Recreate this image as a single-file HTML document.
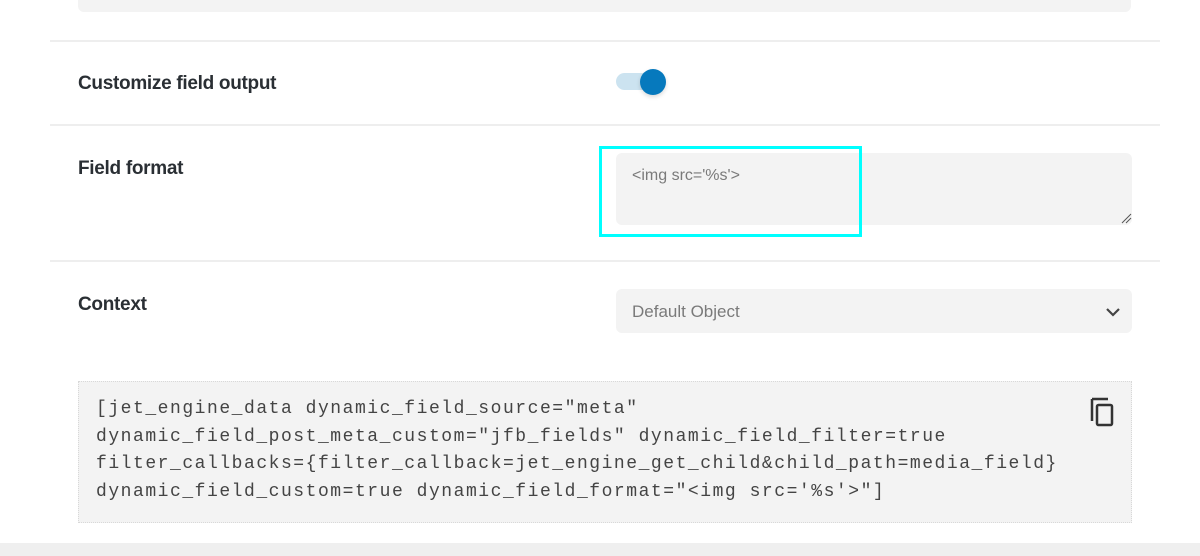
<!DOCTYPE html>
<html><head><style>
body{margin:0;width:1200px;height:556px;background:#fff;position:relative;overflow:hidden;font-family:"Liberation Sans",sans-serif}
.a{position:absolute}
.lbl{font-size:19px;font-weight:bold;color:#2a2f34;left:78px;letter-spacing:-0.3px}
.hr{left:50px;width:1110px;height:2px;background:#eeeeee}
.inp{background:#f3f3f3;border-radius:6px}
pre{margin:0;font-family:"Liberation Mono",monospace;font-size:18px;letter-spacing:1.53px;line-height:27.7px;color:#444}
</style></head><body>
<div class="a inp" style="left:78px;top:-10px;width:1053px;height:22px"></div>
<div class="a hr" style="top:40px"></div>
<div class="a lbl" style="top:73px">Customize field output</div>
<div class="a" style="left:616px;top:73px;width:46px;height:17px;border-radius:9px;background:#cce3f0"></div>
<div class="a" style="left:640px;top:69px;width:26px;height:26px;border-radius:50%;background:#0679bd;box-shadow:0 2px 4px rgba(0,0,0,.15)"></div>
<div class="a hr" style="top:124px"></div>
<div class="a lbl" style="top:158px">Field format</div>
<div class="a inp" style="left:616px;top:153px;width:516px;height:72px"></div>
<svg class="a" style="left:1120px;top:212px" width="12" height="12"><path d="M2 11L11 2M6 11L11 6" stroke="#555" stroke-width="1"/></svg>
<div class="a" style="left:632px;top:167px;font-size:16px;color:#7a7a7a">&lt;img src='%s'&gt;</div>
<div class="a" style="left:599px;top:146px;width:257px;height:85px;border:3px solid #00ffff"></div>
<div class="a hr" style="top:260px"></div>
<div class="a lbl" style="top:294px">Context</div>
<div class="a inp" style="left:616px;top:289px;width:516px;height:44px"></div>
<div class="a" style="left:632px;top:302px;font-size:17px;color:#7a7a7a">Default Object</div>
<svg class="a" style="left:1105px;top:306px" width="16" height="12"><path d="M2 3L8 9L14 3" fill="none" stroke="#444" stroke-width="2.2"/></svg>
<div class="a" style="left:78px;top:381px;width:1052px;height:140px;background:#f3f3f3;border:1px dotted #d8d8d8"></div>
<pre class="a" style="left:96px;top:396px">[jet_engine_data dynamic_field_source="meta"
dynamic_field_post_meta_custom="jfb_fields" dynamic_field_filter=true
filter_callbacks={filter_callback=jet_engine_get_child&amp;child_path=media_field}
dynamic_field_custom=true dynamic_field_format="&lt;img src='%s'&gt;"]</pre>
<svg class="a" style="left:1089px;top:397px" width="28" height="32"><path d="M3 2V24M3 2H19" fill="none" stroke="#333" stroke-width="2.5"/><rect x="8" y="8" width="15" height="20" rx="1.5" fill="none" stroke="#333" stroke-width="2.5"/></svg>
<div class="a" style="left:0;top:543px;width:1200px;height:13px;background:#efefef"></div>
</body></html>
